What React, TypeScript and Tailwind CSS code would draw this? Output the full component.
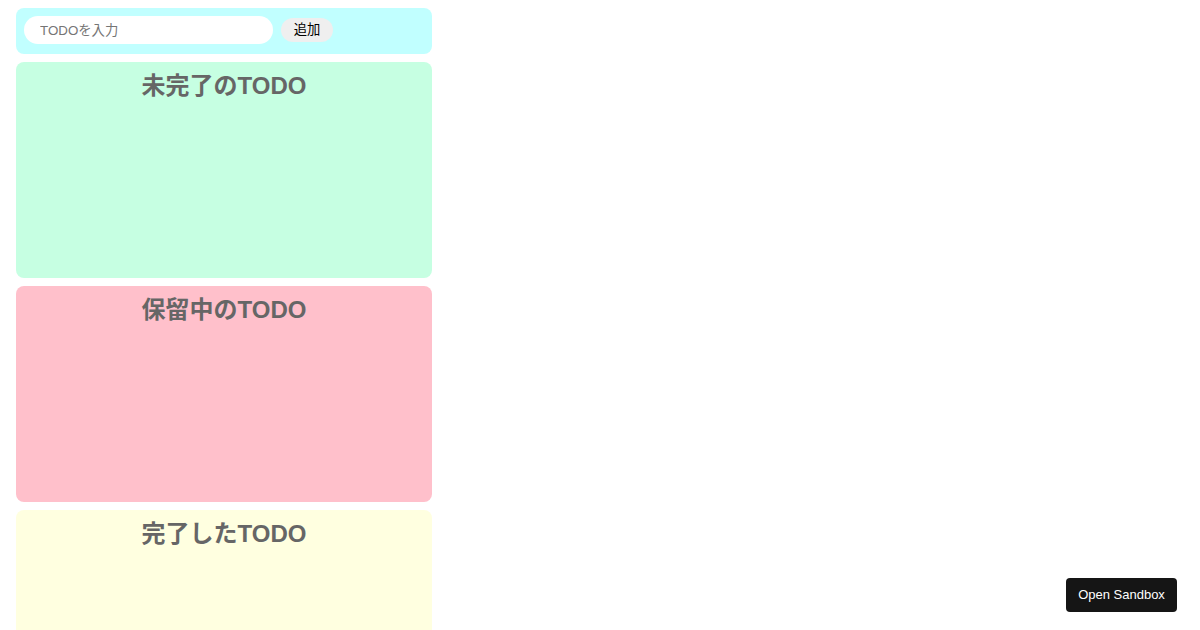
import { useState } from 'react';

const areas = [
    { id: 'incomplete', title: '未完了のTODO', bg: 'bg-[#c6ffe2]' },
    { id: 'pending', title: '保留中のTODO', bg: 'bg-[#ffc0cb]' },
    { id: 'complete', title: '完了したTODO', bg: 'bg-[#ffffe0]' },
];

export default function App() {
    const [text, setText] = useState('');

    return (
        <div className="min-h-screen bg-white text-[#666] font-['Liberation_Sans','Noto_Sans_CJK_JP',sans-serif]">
            <div className="flex flex-col gap-2 pt-2 pl-4">
                {/* Input */}
                <div className="w-[416px] h-[46px] p-2 rounded-lg bg-[#c1ffff] flex items-start">
                    <input
                        value={text}
                        onChange={(e) => setText(e.target.value)}
                        placeholder="TODOを入力"
                        className="w-[249px] h-[28px] rounded-2xl bg-white px-4 text-[13.33px] outline-none placeholder:text-[#757575]"
                    />
                    <button className="ml-2 mt-[2px] w-[52px] h-[24px] rounded-2xl bg-[#efefef] text-[13.33px] text-black text-center hover:bg-[#ff7fff] hover:text-white">
                        追加
                    </button>
                </div>

                {areas.map((area) => (
                    <div key={area.id} className={`w-[416px] min-h-[216px] p-2 rounded-lg ${area.bg}`}>
                        <h2 className="text-center text-2xl font-bold text-[#666] leading-[31px]">{area.title}</h2>
                        <ul />
                    </div>
                ))}
            </div>

            <button className="fixed right-[23px] bottom-[18px] h-[34px] w-[111px] rounded-[4px] bg-[#151515] text-[13px] text-white text-center">
                Open Sandbox
            </button>
        </div>
    );
}
